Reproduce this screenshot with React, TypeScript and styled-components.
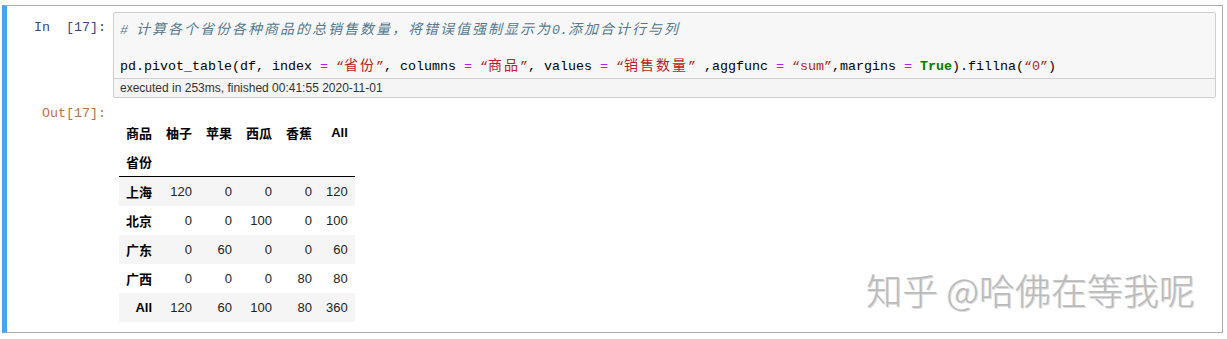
import { FC } from 'react';
import styled, { createGlobalStyle } from 'styled-components';

const GlobalStyle = createGlobalStyle`
  html, body {
    margin: 0;
    background: #fff;
  }
`;

const mono = `"Liberation Mono", "Noto Sans CJK SC", monospace`;
const sans = `"Liberation Sans", "Noto Sans CJK SC", sans-serif`;

const Page = styled.div`
  position: relative;
  width: 1227px;
  height: 339px;
  padding-top: 5px;
  box-sizing: border-box;
`;

const Cell = styled.div`
  margin: 0 4px 0 2px;
  border: 1px solid #ababab;
  border-left: 5px solid #42a5f5;
  padding: 6px 6px 0 0;
  background: #fff;
`;

const Row = styled.div`
  display: flex;
  align-items: flex-start;
`;

const Prompt = styled.div<{ $out?: boolean }>`
  flex: 0 0 106px;
  box-sizing: border-box;
  padding: 7px 7px 0 0;
  text-align: right;
  white-space: pre;
  font-family: ${mono};
  font-size: 13.33px;
  line-height: 18px;
  color: ${(p) => (p.$out ? '#b86f4a' : '#3a4478')};
`;

const InputArea = styled.div`
  flex: 1;
  border: 1px solid #cfcfcf;
  border-radius: 2px;
  background: #f7f7f7;
`;

const Editor = styled.div`
  padding: 6px 6px 5px;
  font-family: ${mono};
  font-size: 13.33px;
  line-height: 18px;
  color: #000;
  white-space: pre;
`;

const Line = styled.div`
  height: 18px;
`;

const Han = styled.span`
  font-family: "Noto Sans CJK SC", sans-serif;
  font-size: 14px;
  letter-spacing: 2px;
`;

const Comment = styled.span`
  font-style: italic;
  color: #55798f;
`;

const Op = styled.span`
  color: #aa22ff;
`;

const Str = styled.span`
  color: #ba2121;
`;

const Kw = styled.span`
  color: #008000;
  font-weight: bold;
`;

const Footer = styled.div`
  border-top: 1px solid #cfcfcf;
  padding: 0 6px;
  height: 18px;
  line-height: 18px;
  font-family: ${sans};
  font-size: 12px;
  color: #333;
  background: #f5f5f5;
`;

const OutputArea = styled.div`
  flex: 1;
  padding: 20px 6px 10px;
`;

const Frame = styled.table`
  border-collapse: collapse;
  font-family: ${sans};
  font-size: 13px;
  color: #222;

  thead {
    border-bottom: 1px solid #000;
  }

  th,
  td {
    height: 29px;
    padding: 0 7px;
    text-align: right;
    vertical-align: middle;
    white-space: nowrap;
  }

  th {
    font-weight: bold;
    color: #000;
  }

  tbody tr:nth-child(odd) {
    background: #f5f5f5;
  }
`;

const Watermark = styled.div`
  position: absolute;
  top: 271px;
  right: 32px;
  font-family: "Noto Sans CJK SC", sans-serif;
  font-size: 36px;
  font-weight: 300;
  line-height: 36px;
  color: #bababa;
  text-shadow: -1px 0 0 #f6f6f6, 1px 1px 0 #dcdcdc;
  white-space: pre;
`;

const columns = ['柚子', '苹果', '西瓜', '香蕉', 'All'];

const rows: [string, number[]][] = [
  ['上海', [120, 0, 0, 0, 120]],
  ['北京', [0, 0, 100, 0, 100]],
  ['广东', [0, 60, 0, 0, 60]],
  ['广西', [0, 0, 0, 80, 80]],
  ['All', [120, 60, 100, 80, 360]],
];

const Q: FC<{ children: React.ReactNode }> = ({ children }) => (
  <Str>
    “{children}”
  </Str>
);

const App: FC = () => {
  return (
    <Page>
      <GlobalStyle />
      <Cell>
        <Row>
          <Prompt>{'In  [17]:'}</Prompt>
          <InputArea>
            <Editor>
              <Line>
                <Comment>
                  # <Han>计算各个省份各种商品的总销售数量，将错误值强制显示为</Han>0.<Han>添加合计行与列</Han>
                </Comment>
              </Line>
              <Line />
              <Line>
                pd.pivot_table(df, index <Op>=</Op> <Q><Han>省份</Han></Q>, columns <Op>=</Op> <Q><Han>商品</Han></Q>, values{' '}
                <Op>=</Op> <Q><Han>销售数量</Han></Q> ,aggfunc <Op>=</Op> <Q>sum</Q>,margins <Op>=</Op> <Kw>True</Kw>).fillna(<Q>0</Q>)
              </Line>
            </Editor>
            <Footer>executed in 253ms, finished 00:41:55 2020-11-01</Footer>
          </InputArea>
        </Row>
        <Row>
          <Prompt $out>Out[17]:</Prompt>
          <OutputArea>
            <Frame>
              <thead>
                <tr>
                  <th>商品</th>
                  {columns.map((c) => (
                    <th key={c}>{c}</th>
                  ))}
                </tr>
                <tr>
                  <th>省份</th>
                  {columns.map((c) => (
                    <th key={c} />
                  ))}
                </tr>
              </thead>
              <tbody>
                {rows.map(([name, vals]) => (
                  <tr key={name}>
                    <th>{name}</th>
                    {vals.map((v, i) => (
                      <td key={i}>{v}</td>
                    ))}
                  </tr>
                ))}
              </tbody>
            </Frame>
          </OutputArea>
        </Row>
      </Cell>
      <Watermark>知乎 @哈佛在等我呢</Watermark>
    </Page>
  );
};

export default App;
